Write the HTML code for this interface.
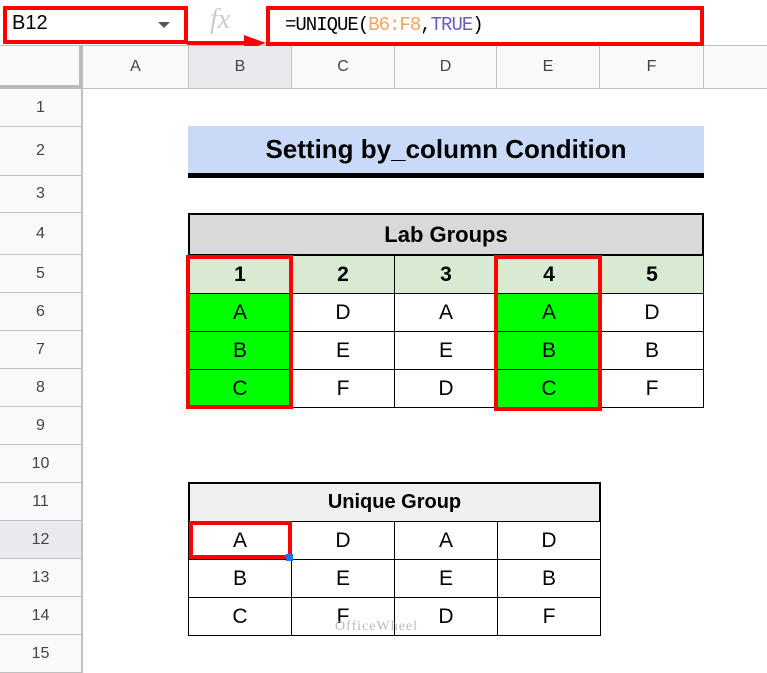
<!DOCTYPE html>
<html><head><style>
*{margin:0;padding:0;box-sizing:border-box}
body{width:767px;height:668px;position:relative;overflow:hidden;background:#fff;font-family:"Liberation Sans",Arial,sans-serif}
.a{position:absolute}
.ch{position:absolute;top:46px;height:43px;border-right:1px solid #c0c0c0;border-bottom:1px solid #c0c0c0;background:#f8f9fa;color:#444;font-size:16px;display:flex;align-items:center;justify-content:center}
.rh{position:absolute;left:0;width:83px;border-bottom:1px solid #c0c0c0;border-right:2px solid #c0c0c0;background:#f8f9fa;color:#444;font-size:16px;display:flex;align-items:center;justify-content:center}
.c{position:absolute;border:1px solid #000;display:flex;align-items:center;justify-content:center;font-size:21px;color:#000}
.g{background:#00ff00}
.h{background:#d9ead3;font-weight:bold}
.red{position:absolute;border:4px solid #f00}
</style></head><body>
<div class="a" style="left:0;top:0;width:767px;height:46px;background:#fff;border-bottom:1px solid #c0c0c0"></div>
<div class="red" style="left:3px;top:6px;width:185px;height:38px"></div>
<div class="a" style="left:12px;top:12px;font-size:20px;color:#000">B12</div>
<div class="a" style="left:158px;top:22px;width:0;height:0;border-left:6px solid transparent;border-right:6px solid transparent;border-top:6px solid #555"></div>
<div class="a" style="left:210px;top:4px;font-family:'Liberation Serif',serif;font-style:italic;font-size:28px;color:#ccc">fx</div>
<div class="red" style="left:266px;top:6px;width:438px;height:40px"></div>
<div class="a" style="left:285px;top:14px;font-family:'Liberation Mono',monospace;font-size:19px;color:#000;letter-spacing:-1px">=UNIQUE(<span style="color:#f6a35b">B6:F8</span>,<span style="color:#6a5acd">TRUE</span>)</div>
<div class="a" style="left:187px;top:41px;width:60px;height:4px;background:#f00"></div>
<div class="a" style="left:244px;top:35px;width:0;height:0;border-top:8px solid transparent;border-bottom:8px solid transparent;border-left:22px solid #f00"></div>
<div class="ch" style="left:0;width:83px;border-right:4px solid #bbb;border-bottom:4px solid #bbb"></div>
<div class="ch" style="left:83px;width:106px">A</div>
<div class="ch" style="left:189px;width:103px;background:#e8eaed">B</div>
<div class="ch" style="left:292px;width:103px">C</div>
<div class="ch" style="left:395px;width:102px">D</div>
<div class="ch" style="left:497px;width:103px">E</div>
<div class="ch" style="left:600px;width:104px">F</div>
<div class="ch" style="left:704px;width:63px;border-right:none"></div>
<div class="rh" style="top:89px;height:38px">1</div>
<div class="rh" style="top:127px;height:49px">2</div>
<div class="rh" style="top:176px;height:37px">3</div>
<div class="rh" style="top:213px;height:42px">4</div>
<div class="rh" style="top:255px;height:38px">5</div>
<div class="rh" style="top:293px;height:38px">6</div>
<div class="rh" style="top:331px;height:38px">7</div>
<div class="rh" style="top:369px;height:38px">8</div>
<div class="rh" style="top:407px;height:38px">9</div>
<div class="rh" style="top:445px;height:38px">10</div>
<div class="rh" style="top:483px;height:38px">11</div>
<div class="rh" style="top:521px;height:38px;background:#e8eaed">12</div>
<div class="rh" style="top:559px;height:38px">13</div>
<div class="rh" style="top:597px;height:38px">14</div>
<div class="rh" style="top:635px;height:38px">15</div>
<div class="a" style="left:188px;top:126px;width:516px;height:52px;background:#c9daf8;border-bottom:5px solid #000;display:flex;align-items:center;justify-content:center;font-weight:bold;font-size:26px;color:#000">Setting by_column Condition</div>
<div class="c" style="left:188px;top:213px;width:516px;height:43px;background:#d9d9d9;font-weight:bold;font-size:22px;border-width:2px">Lab Groups</div>
<div class="c h" style="left:188px;top:255px;width:104px;height:39px">1</div>
<div class="c h" style="left:291px;top:255px;width:104px;height:39px">2</div>
<div class="c h" style="left:394px;top:255px;width:104px;height:39px">3</div>
<div class="c h" style="left:497px;top:255px;width:104px;height:39px">4</div>
<div class="c h" style="left:600px;top:255px;width:104px;height:39px">5</div>
<div class="c g" style="left:188px;top:293px;width:104px;height:39px">A</div>
<div class="c" style="left:291px;top:293px;width:104px;height:39px">D</div>
<div class="c" style="left:394px;top:293px;width:104px;height:39px">A</div>
<div class="c g" style="left:497px;top:293px;width:104px;height:39px">A</div>
<div class="c" style="left:600px;top:293px;width:104px;height:39px">D</div>
<div class="c g" style="left:188px;top:331px;width:104px;height:39px">B</div>
<div class="c" style="left:291px;top:331px;width:104px;height:39px">E</div>
<div class="c" style="left:394px;top:331px;width:104px;height:39px">E</div>
<div class="c g" style="left:497px;top:331px;width:104px;height:39px">B</div>
<div class="c" style="left:600px;top:331px;width:104px;height:39px">B</div>
<div class="c g" style="left:188px;top:369px;width:104px;height:39px">C</div>
<div class="c" style="left:291px;top:369px;width:104px;height:39px">F</div>
<div class="c" style="left:394px;top:369px;width:104px;height:39px">D</div>
<div class="c g" style="left:497px;top:369px;width:104px;height:39px">C</div>
<div class="c" style="left:600px;top:369px;width:104px;height:39px">F</div>
<div class="red" style="left:186px;top:255px;width:107px;height:154px"></div>
<div class="red" style="left:494px;top:255px;width:108px;height:156px"></div>
<div class="c" style="left:188px;top:482px;width:413px;height:40px;background:#efefef;font-weight:bold;font-size:20px;border-width:2px 2px 1px 2px">Unique Group</div>
<div class="c" style="left:188px;top:521px;width:104px;height:39px">A</div>
<div class="c" style="left:291px;top:521px;width:104px;height:39px">D</div>
<div class="c" style="left:394px;top:521px;width:104px;height:39px">A</div>
<div class="c" style="left:497px;top:521px;width:104px;height:39px">D</div>
<div class="c" style="left:188px;top:559px;width:104px;height:39px">B</div>
<div class="c" style="left:291px;top:559px;width:104px;height:39px">E</div>
<div class="c" style="left:394px;top:559px;width:104px;height:39px">E</div>
<div class="c" style="left:497px;top:559px;width:104px;height:39px">B</div>
<div class="c" style="left:188px;top:597px;width:104px;height:39px">C</div>
<div class="c" style="left:291px;top:597px;width:104px;height:39px">F</div>
<div class="c" style="left:394px;top:597px;width:104px;height:39px">D</div>
<div class="c" style="left:497px;top:597px;width:104px;height:39px">F</div>
<div class="red" style="left:189px;top:521px;width:103px;height:38px"></div>
<div class="a" style="left:286px;top:554px;width:7px;height:7px;background:#1a73e8"></div>
<div class="a" style="left:335px;top:619px;font-family:'Liberation Serif',serif;font-size:14px;color:#bbb;letter-spacing:1px">OfficeWheel</div>
</body></html>
